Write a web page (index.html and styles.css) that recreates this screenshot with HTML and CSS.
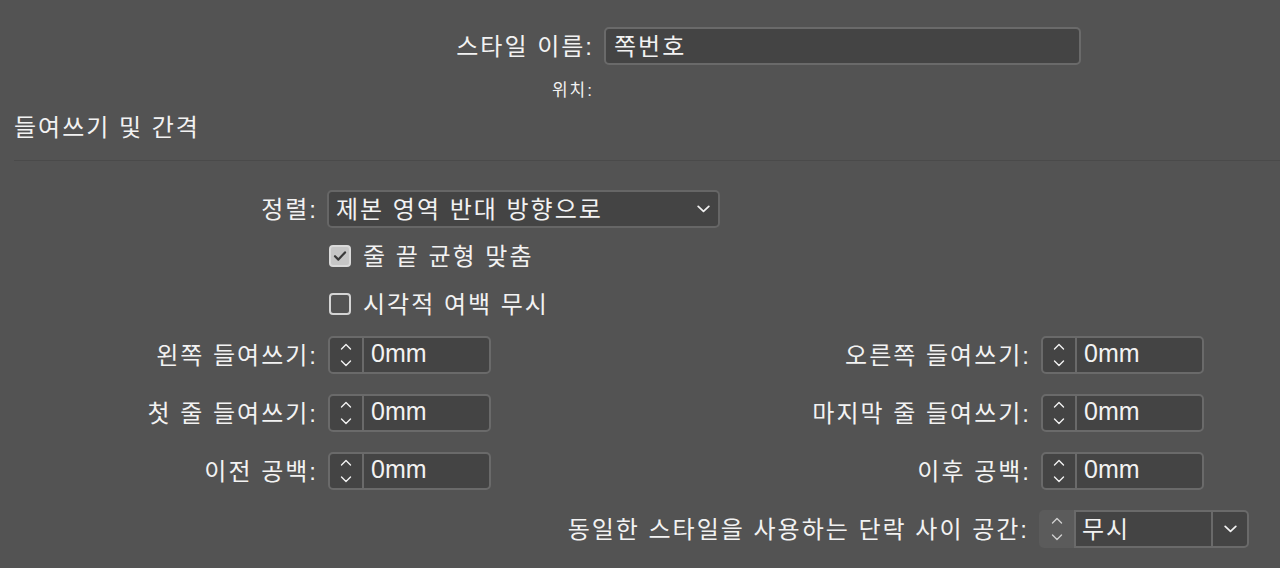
FILE: index.html
```html
<!DOCTYPE html>
<html lang="ko">
<head>
    <meta charset="utf-8">
    <title>단락 스타일 옵션</title>
    <link rel="stylesheet" href="styles.css">
</head>
<body>
    <div class="panel">
        <div class="row name-row">
            <label class="label label-top">스타일 이름:</label>
            <div class="text-field name-field">쪽번호</div>
        </div>
        <div class="row loc-row">
            <span class="label label-top small">위치:</span>
        </div>

        <div class="section-title">들여쓰기 및 간격</div>
        <div class="divider"></div>

        <div class="row align-row">
            <span class="label label-left">정렬:</span>
            <div class="select">
                <span class="select-value">제본 영역 반대 방향으로</span>
                <svg class="chev" width="13" height="8" viewBox="0 0 13 8"><path d="M1.2 1.4 L6.5 6.4 L11.8 1.4" /></svg>
            </div>
        </div>

        <div class="row check-row first">
            <span class="check checked">
                <svg width="14" height="12" viewBox="0 0 14 12"><path d="M2 6.2 L5.4 9.6 L12 2.4" /></svg>
            </span>
            <span class="check-text">줄 끝 균형 맞춤</span>
        </div>
        <div class="row check-row">
            <span class="check"></span>
            <span class="check-text">시각적 여백 무시</span>
        </div>

        <div class="row spin-row">
            <div class="group">
                <span class="label label-left">왼쪽 들여쓰기:</span>
                <div class="spin-box">
                    <span class="spinner">
                        <svg width="12" height="30" viewBox="0 0 12 30"><path d="M1.5 9 L6 4.5 L10.5 9" /><path d="M1.5 21 L6 25.5 L10.5 21" /></svg>
                    </span>
                    <span class="spin-value">0mm</span>
                </div>
            </div>
            <div class="group right">
                <span class="label">오른쪽 들여쓰기:</span>
                <div class="spin-box">
                    <span class="spinner">
                        <svg width="12" height="30" viewBox="0 0 12 30"><path d="M1.5 9 L6 4.5 L10.5 9" /><path d="M1.5 21 L6 25.5 L10.5 21" /></svg>
                    </span>
                    <span class="spin-value">0mm</span>
                </div>
            </div>
        </div>

        <div class="row spin-row">
            <div class="group">
                <span class="label label-left">첫 줄 들여쓰기:</span>
                <div class="spin-box">
                    <span class="spinner">
                        <svg width="12" height="30" viewBox="0 0 12 30"><path d="M1.5 9 L6 4.5 L10.5 9" /><path d="M1.5 21 L6 25.5 L10.5 21" /></svg>
                    </span>
                    <span class="spin-value">0mm</span>
                </div>
            </div>
            <div class="group right">
                <span class="label">마지막 줄 들여쓰기:</span>
                <div class="spin-box">
                    <span class="spinner">
                        <svg width="12" height="30" viewBox="0 0 12 30"><path d="M1.5 9 L6 4.5 L10.5 9" /><path d="M1.5 21 L6 25.5 L10.5 21" /></svg>
                    </span>
                    <span class="spin-value">0mm</span>
                </div>
            </div>
        </div>

        <div class="row spin-row">
            <div class="group">
                <span class="label label-left">이전 공백:</span>
                <div class="spin-box">
                    <span class="spinner">
                        <svg width="12" height="30" viewBox="0 0 12 30"><path d="M1.5 9 L6 4.5 L10.5 9" /><path d="M1.5 21 L6 25.5 L10.5 21" /></svg>
                    </span>
                    <span class="spin-value">0mm</span>
                </div>
            </div>
            <div class="group right">
                <span class="label">이후 공백:</span>
                <div class="spin-box">
                    <span class="spinner">
                        <svg width="12" height="30" viewBox="0 0 12 30"><path d="M1.5 9 L6 4.5 L10.5 9" /><path d="M1.5 21 L6 25.5 L10.5 21" /></svg>
                    </span>
                    <span class="spin-value">0mm</span>
                </div>
            </div>
        </div>

        <div class="row spin-row last-row">
            <span class="label">동일한 스타일을 사용하는 단락 사이 공간:</span>
            <div class="combo">
                <span class="spinner flat">
                    <svg width="12" height="30" viewBox="0 0 12 30"><path d="M1.5 9 L6 4.5 L10.5 9" /><path d="M1.5 21 L6 25.5 L10.5 21" /></svg>
                </span>
                <span class="combo-value">무시</span>
                <span class="combo-btn">
                    <svg class="chev" width="13" height="8" viewBox="0 0 13 8"><path d="M1.2 1.4 L6.5 6.4 L11.8 1.4" /></svg>
                </span>
            </div>
        </div>
    </div>
</body>
</html>
```

FILE: styles.css
```css
html, body {
    margin: 0;
    background: #535353;
}
body {
    font-family: "Liberation Sans", "Noto Sans CJK KR", sans-serif;
    color: #f2f2f2;
    font-size: 24px;
    letter-spacing: 2px;
}
.panel {
    width: 1280px;
    height: 568px;
    padding-top: 27px;
    box-sizing: border-box;
    overflow: hidden;
}
.row {
    display: flex;
    align-items: center;
}
.label {
    white-space: nowrap;
    text-align: right;
    margin-right: -2px;
    padding-bottom: 4px;
}
.label-top {
    width: 594px;
    flex: none;
}
.label-left {
    width: 318px;
    flex: none;
}
.small {
    font-size: 17px;
    letter-spacing: 2px;
}
.name-row {
    height: 38px;
    gap: 12px;
}
.text-field {
    height: 38px;
    box-sizing: border-box;
    background: #444444;
    border: 2px solid #6a6a6a;
    border-radius: 5px;
    padding: 0 8px 3px;
    display: flex;
    align-items: center;
}
.name-field {
    width: 477px;
}
.loc-row {
    height: 20px;
    margin-top: 15px;
}
.section-title {
    height: 30px;
    line-height: 28px;
    margin-top: 14px;
    padding-left: 14px;
}
.divider {
    height: 1px;
    margin: 16px 0 0 14px;
    background: #4a4a4a;
}
.align-row {
    margin-top: 29px;
    height: 38px;
    gap: 11px;
}
.select {
    width: 393px;
    height: 38px;
    box-sizing: border-box;
    background: #444444;
    border: 2px solid #666666;
    border-radius: 5px;
    display: flex;
    align-items: center;
    justify-content: space-between;
    padding: 0 8px 0 7px;
}
.select-value {
    padding-bottom: 3px;
}
.chev path,
.spinner path,
.check path {
    fill: none;
    stroke: #f2f2f2;
    stroke-width: 1.7;
    stroke-linecap: round;
    stroke-linejoin: round;
}
.check-row {
    height: 28px;
    margin-top: 20px;
    padding-left: 329px;
    gap: 12px;
}
.check-row.first {
    margin-top: 14px;
}
.check-text {
    padding-bottom: 4px;
}
.check {
    width: 22px;
    height: 22px;
    box-sizing: border-box;
    border: 2px solid #d4d4d4;
    border-radius: 4px;
    display: flex;
    align-items: center;
    justify-content: center;
}
.check.checked {
    background: #c6c6c6;
    border-color: #dadada;
}
.check.checked path {
    stroke: #3a3a3a;
    stroke-width: 2.2;
}
.spin-row {
    height: 38px;
    margin-top: 20px;
    justify-content: space-between;
    padding-right: 76px;
}
.check-row + .spin-row {
    margin-top: 18px;
}
.group {
    display: flex;
    align-items: center;
    gap: 12px;
}
.spin-box {
    width: 163px;
    height: 38px;
    box-sizing: border-box;
    background: #444444;
    border: 2px solid #6a6a6a;
    border-radius: 5px;
    display: flex;
}
.spinner {
    width: 32px;
    flex: none;
    display: flex;
    align-items: center;
    justify-content: center;
    border-right: 2px solid #6a6a6a;
}
.spinner path {
    stroke-width: 1.4;
}
.spin-value {
    font-family: "Liberation Sans", sans-serif;
    font-size: 25px;
    letter-spacing: 0;
    padding: 0 0 3px 7px;
    display: flex;
    align-items: center;
}
.last-row {
    justify-content: flex-end;
    padding-right: 31px;
    gap: 12px;
}
.combo {
    width: 210px;
    height: 38px;
    display: flex;
}
.spinner.flat {
    width: 35px;
    background: #5b5b5b;
    border: none;
    border-radius: 5px 0 0 5px;
}
.spinner.flat path {
    stroke: #cfcfcf;
}
.combo-value {
    flex: 1;
    background: #444444;
    border: 2px solid #6a6a6a;
    border-right: none;
    padding: 0 0 3px 6px;
    display: flex;
    align-items: center;
}
.combo-btn {
    width: 34px;
    background: #444444;
    border: 2px solid #6a6a6a;
    border-radius: 0 5px 5px 0;
    display: flex;
    align-items: center;
    justify-content: center;
}
```
